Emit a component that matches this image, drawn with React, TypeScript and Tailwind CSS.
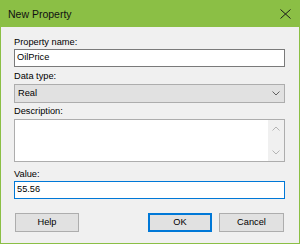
import React from 'react';

function Label({ children, className = '' }: { children: React.ReactNode; className?: string }) {
  return <div className={`h-[12px] text-[9.25px] leading-[12px] text-black ${className}`}>{children}</div>;
}

function Chevron({ up = false, color }: { up?: boolean; color: string }) {
  return (
    <svg width="8" height="5" viewBox="0 0 8 5" className="block">
      <path d={up ? 'M0.5 4.5 L4 1 L7.5 4.5' : 'M0.5 0.5 L4 4 L7.5 0.5'} fill="none" stroke={color} strokeWidth="1" />
    </svg>
  );
}

export default function App() {
  return (
    <div className="w-[300px] h-[244px] flex flex-col font-['Liberation_Sans',Arial,sans-serif]">
      <div className="h-[27px] bg-[#8bbf45] flex items-center justify-between pl-[8px] pr-[9px]">
        <span className="text-[10.5px] leading-[14px] text-[#111] mt-[1px]">New Property</span>
        <svg width="11" height="10" viewBox="0 0 11 10" className="block">
          <path d="M0.5 0.5 L10.5 9.5 M10.5 0.5 L0.5 9.5" stroke="#1a1a1a" strokeWidth="1" />
        </svg>
      </div>

      <div className="flex-1 bg-[#f0f0f0] border-x border-b border-[#8bbf45] pl-[13px] pr-[14px] pt-[9px] flex flex-col">
        <Label>Property name:</Label>
        <div className="mt-[1px] h-[18px] bg-white border border-[#7a7a7a] flex items-center px-[2px] text-[9.25px]">
          OilPrice
        </div>

        <Label className="mt-[3px]">Data type:</Label>
        <div className="mt-[2px] h-[19px] bg-[#e1e1e1] border border-[#adadad] flex items-center justify-between pl-[3px] pr-[4px] text-[9.25px]">
          <span>Real</span>
          <Chevron color="#606060" />
        </div>

        <Label className="mt-[2px]">Description:</Label>
        <div className="mt-[2px] h-[43px] bg-white border border-[#adadad] flex justify-end">
          <div className="w-[16px] bg-[#f0f0f0] flex flex-col items-center justify-between py-[6px]">
            <Chevron up color="#b4b4b4" />
            <Chevron color="#b4b4b4" />
          </div>
        </div>

        <Label className="mt-[6px]">Value:</Label>
        <div className="mt-[1px] h-[18px] bg-white border border-[#0078d7] flex items-center px-[2px] text-[9.25px]">
          55.56
        </div>

        <div className="mt-[14px] flex justify-between">
          <button className="ml-[1px] w-[64px] h-[19px] bg-[#e1e1e1] border border-[#adadad] text-[9.25px] leading-none">
            Help
          </button>
          <div className="flex gap-[7px] mr-px">
            <button className="w-[64px] h-[19px] bg-[#e1e1e1] border-2 border-[#0078d7] text-[9.25px] leading-none">
              OK
            </button>
            <button className="w-[65px] h-[19px] bg-[#e1e1e1] border border-[#adadad] text-[9.25px] leading-none">
              Cancel
            </button>
          </div>
        </div>
      </div>
    </div>
  );
}
